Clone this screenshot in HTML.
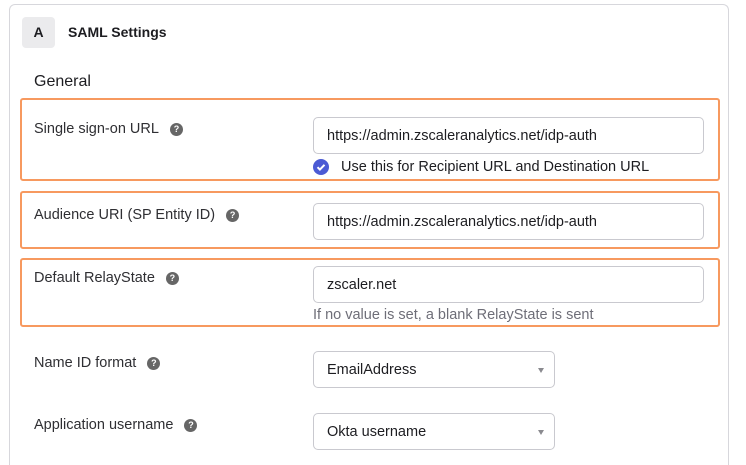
<!DOCTYPE html>
<html><head><style>
html,body{margin:0;width:746px;height:465px;overflow:hidden}
body{background:#fff;font-family:"Liberation Sans",sans-serif;color:#1d1d21;position:relative}
.a{position:absolute}
.card{left:9px;top:4px;width:718px;height:460px;border:1px solid #d7d7dc;border-bottom:none;border-radius:6px 6px 0 0}
.badge{left:22px;top:17px;width:33px;height:31px;background:#ebebed;border-radius:4px;font-weight:bold;font-size:14px;text-align:center;line-height:31px}
.ob{border:2px solid #f7995f;border-radius:3px;left:20px;width:696px}
.lbl{left:34px;font-size:14.5px;color:#2f2f33}
.q{display:inline-block;width:13px;height:13px;border-radius:50%;background:#666;color:#fff;font-size:9px;font-weight:bold;text-align:center;line-height:13px;vertical-align:1px;margin-left:11px}
.in{left:313px;width:391px;height:37px;border:1px solid #c9c9cf;border-radius:5px;font-size:14.5px;line-height:37px;padding-left:13px;box-sizing:border-box;color:#1d1d21}
.sel{width:242px}
.arr{position:absolute;right:10px;top:16px;width:0;height:0;border-left:3px solid transparent;border-right:3px solid transparent;border-top:5px solid #8a8a8f}
</style></head><body>
<div class="a card"></div>
<div class="a badge">A</div>
<div class="a" style="left:68px;top:24px;font-size:14px;font-weight:bold">SAML Settings</div>
<div class="a" style="left:34px;top:73px;font-size:16px">General</div>
<div class="a ob" style="top:98px;height:79px"></div>
<div class="a ob" style="top:191px;height:54px"></div>
<div class="a ob" style="top:258px;height:65px"></div>
<div class="a lbl" style="top:121px">Single sign-on URL<span class="q">?</span></div>
<div class="a in" style="top:117px">https://admin.zscaleranalytics.net/idp-auth</div>
<div class="a" style="left:313px;top:159px;width:16px;height:16px;border-radius:50%;background:#4c5bd4"><svg width="16" height="16"><path d="M4.5 8.2l2.4 2.4 4.6-4.8" stroke="#fff" stroke-width="2" fill="none"/></svg></div>
<div class="a" style="left:341px;top:159px;font-size:14.5px">Use this for Recipient URL and Destination URL</div>
<div class="a lbl" style="top:207px">Audience URI (SP Entity ID)<span class="q">?</span></div>
<div class="a in" style="top:203px">https://admin.zscaleranalytics.net/idp-auth</div>
<div class="a lbl" style="top:270px">Default RelayState<span class="q">?</span></div>
<div class="a in" style="top:266px">zscaler.net</div>
<div class="a" style="left:313px;top:307px;font-size:14.5px;color:#6e6e78">If no value is set, a blank RelayState is sent</div>
<div class="a lbl" style="top:355px">Name ID format<span class="q">?</span></div>
<div class="a in sel" style="top:351px">EmailAddress<span class="arr"></span></div>
<div class="a lbl" style="top:417px">Application username<span class="q">?</span></div>
<div class="a in sel" style="top:413px">Okta username<span class="arr"></span></div>
</body></html>
